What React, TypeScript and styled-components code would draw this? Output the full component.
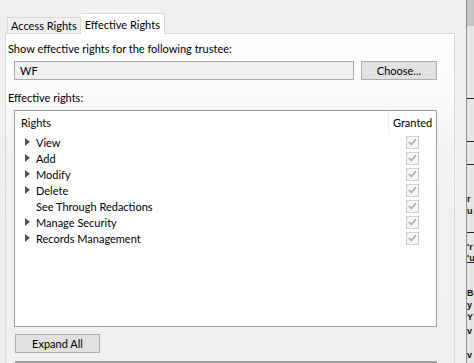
import React from "react";
import styled, { createGlobalStyle } from "styled-components";

const rights = [
  { name: "View", expandable: true },
  { name: "Add", expandable: true },
  { name: "Modify", expandable: true },
  { name: "Delete", expandable: true },
  { name: "See Through Redactions", expandable: false },
  { name: "Manage Security", expandable: true },
  { name: "Records Management", expandable: true },
];

// fragments of the window peeking in at the right edge
const sideMarks = [
  { top: 98, text: "", rule: true },
  { top: 141, text: "", rule: true },
  { top: 164, text: "", rule: true },
  { top: 194, text: "r" },
  { top: 206, text: "u" },
  { top: 232, text: "", rule: true },
  { top: 242, text: "'r" },
  { top: 253, text: "'u" },
  { top: 262, text: "", rule: true },
  { top: 288, text: "B" },
  { top: 300, text: "y" },
  { top: 312, text: "Y" },
  { top: 326, text: "v" },
  { top: 350, text: "v" },
];

function App() {
  return (
    <>
      <GlobalStyle />
      <Root>
        <Dialog>
          <TabStrip>
            <Tab>Access Rights</Tab>
            <Tab $active>Effective Rights</Tab>
          </TabStrip>
          <Panel>
            <Label>Show effective rights for the following trustee:</Label>
            <TrusteeRow>
              <TextBox>WF</TextBox>
              <Button $width={76}>Choose...</Button>
            </TrusteeRow>
            <Label $top={10}>Effective rights:</Label>
            <ListBox>
              <ListHeader>
                <HeaderCell>Rights</HeaderCell>
                <GrantedHeader>Granted</GrantedHeader>
              </ListHeader>
              {rights.map((r) => (
                <RightRow key={r.name}>
                  <Expander>
                    {r.expandable && (
                      <svg width="5" height="8" viewBox="0 0 5 8">
                        <path d="M0 0 L5 4 L0 8 Z" fill="#555" />
                      </svg>
                    )}
                  </Expander>
                  <RightName>{r.name}</RightName>
                  <CheckCell>
                    <CheckBox>
                      <svg width="9" height="8" viewBox="0 0 9 8">
                        <path
                          d="M1 4 L3.5 6.5 L8 1"
                          fill="none"
                          stroke="#a8a8a8"
                          strokeWidth="1.6"
                        />
                      </svg>
                    </CheckBox>
                  </CheckCell>
                </RightRow>
              ))}
            </ListBox>
            <Button $width={85} $top={7}>
              Expand All
            </Button>
            <NextBox />
          </Panel>
        </Dialog>
        <SideWindow>
          <SideThumb />
          {sideMarks.map((m, i) =>
            m.rule ? (
              <SideRule key={i} style={{ top: m.top }} />
            ) : (
              <SideText key={i} style={{ top: m.top }}>
                {m.text}
              </SideText>
            )
          )}
        </SideWindow>
      </Root>
    </>
  );
}

export default App;

const GlobalStyle = createGlobalStyle`
  body {
    margin: 0;
    background: #f0f0f0;
    font-family: "Segoe UI", Lato, "Noto Sans", sans-serif;
    font-size: 11px;
    color: #000;
  }
`;

const Root = styled.div`
  display: flex;
  width: 474px;
  height: 363px;
  overflow: hidden;
  background: #f0f0f0;
`;

const Dialog = styled.div`
  flex: 0 0 466px;
  display: flex;
  flex-direction: column;
  padding: 13px 11px 0 5px;
  box-sizing: border-box;
`;

const TabStrip = styled.div`
  display: flex;
  align-items: flex-end;
  height: 20px;
  padding-left: 2px;
  position: relative;
  z-index: 1;
`;

const Tab = styled.div<{ $active?: boolean }>`
  height: ${(p) => (p.$active ? "21px" : "16px")};
  margin-bottom: ${(p) => (p.$active ? "-1px" : "0")};
  padding: 0 ${(p) => (p.$active ? "4px" : "3px")};
  display: flex;
  align-items: center;
  box-sizing: border-box;
  border: 1px solid #d9d9d9;
  border-bottom: none;
  background: ${(p) => (p.$active ? "#ffffff" : "#f0f0f0")};
  white-space: nowrap;
  & + & {
    border-left: none;
  }
`;

const Panel = styled.div`
  flex: 1;
  display: flex;
  flex-direction: column;
  border: 1px solid #d9d9d9;
  border-bottom: none;
  background: linear-gradient(#ffffff 0px, #fbfbfb 60px, #f2f2f2 120px, #f0f0f0 100%);
  padding: 7px 17px 0 2px;
  min-height: 0;
`;

const Label = styled.div<{ $top?: number }>`
  height: 16px;
  line-height: 16px;
  margin-top: ${(p) => p.$top ?? 0}px;
  white-space: nowrap;
`;

const TrusteeRow = styled.div`
  display: flex;
  gap: 7px;
  height: 19px;
  margin: 4px 0 0 6px;
`;

const TextBox = styled.div`
  flex: 1;
  box-sizing: border-box;
  border: 1px solid #adadad;
  background: #f0f0f0;
  padding-left: 5px;
  line-height: 17px;
`;

const Button = styled.div<{ $width: number; $top?: number }>`
  width: ${(p) => p.$width}px;
  height: 19px;
  margin-top: ${(p) => p.$top ?? 0}px;
  margin-left: ${(p) => (p.$top !== undefined ? "7px" : "0")};
  flex: none;
  box-sizing: border-box;
  border: 1px solid #adadad;
  background: #e1e1e1;
  display: flex;
  align-items: center;
  justify-content: center;
`;

const ListBox = styled.div`
  height: 217px;
  margin: 4px 0 0 6px;
  box-sizing: border-box;
  border: 1px solid #9c9c9c;
  background: #ffffff;
  display: flex;
  flex-direction: column;
`;

const ListHeader = styled.div`
  display: flex;
  height: 23px;
  align-items: center;
`;

const HeaderCell = styled.div`
  flex: 1;
  padding-left: 6px;
`;

const GrantedHeader = styled.div`
  width: 48px;
  height: 100%;
  box-sizing: border-box;
  border-left: 1px solid #ececec;
  padding-left: 4px;
  display: flex;
  align-items: center;
`;

const RightRow = styled.div`
  display: flex;
  align-items: center;
  height: 16px;
`;

const Expander = styled.div`
  width: 21px;
  padding-left: 10px;
  box-sizing: border-box;
  display: flex;
  align-items: center;
`;

const RightName = styled.div`
  flex: 1;
  white-space: nowrap;
`;

const CheckCell = styled.div`
  width: 48px;
  display: flex;
  justify-content: center;
`;

const CheckBox = styled.div`
  width: 13px;
  height: 13px;
  box-sizing: border-box;
  border: 1px solid #cccccc;
  background: #f7f7f7;
  display: flex;
  align-items: center;
  justify-content: center;
`;

const NextBox = styled.div`
  margin: 8px 0 0 7px;
  flex: 1;
  border-top: 2px solid #a0a0a0;
  background: #e8e8e8;
`;

const SideWindow = styled.div`
  flex: 1;
  position: relative;
  border-left: 1px solid #8f8f8f;
  background: #e6e6e6;
  overflow: hidden;
`;

const SideThumb = styled.div`
  height: 26px;
  background: #c4c4c4;
`;

const SideRule = styled.div`
  position: absolute;
  left: 0;
  right: 0;
  height: 1px;
  background: #222;
`;

const SideText = styled.div`
  position: absolute;
  left: 0;
  font-family: "Liberation Sans", sans-serif;
  font-size: 9px;
  font-weight: bold;
  line-height: 10px;
  color: #111;
  white-space: nowrap;
`;
